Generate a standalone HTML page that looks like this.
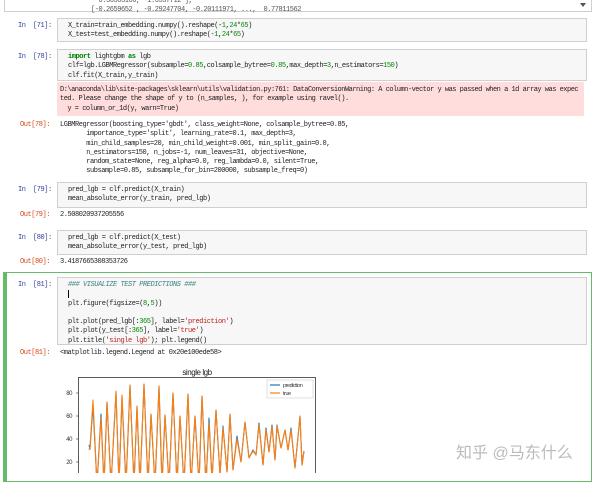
<!DOCTYPE html>
<html><head><meta charset="utf-8"><style>
*{margin:0;padding:0;box-sizing:border-box}
body{width:600px;height:473px;overflow:hidden;background:#fff;position:relative;font-family:"Liberation Mono","Noto Sans CJK SC",monospace;font-size:7px;color:#222;letter-spacing:-0.45px}
.a{position:absolute;white-space:pre;line-height:9.3px}
.box{position:absolute;left:57px;width:530px;background:#f7f7f7;border:1px solid #cfcfcf}
.lbl{position:absolute;left:18px;color:#303f9f;white-space:pre}
.olbl{position:absolute;left:20px;color:#d84315;white-space:pre}
.kw{color:#008000;font-weight:bold}.n{color:#080}.s{color:#ba2121}.c{color:#408080;font-style:italic}
</style></head><body>
<div style="position:absolute;left:4px;top:-2px;width:588px;height:14px;border:1px solid #cfcfcf;border-top:none;background:#fff"></div>
<div class="a" style="left:91px;top:-3px;color:#555">  0.36303166, -1.6537712 ],
[-0.2659652 , -0.29247704, -0.20111971, ...,  0.77811562</div>
<div style="position:absolute;left:580px;top:3px;border:3px solid transparent;border-top:4px solid #555"></div>

<div class="lbl" style="top:22px">In  [71]:</div>
<div class="box" style="top:18px;height:24px"></div>
<div class="a" style="left:68px;top:22px">X_train=train_embedding.numpy().reshape(-<span class="n">1</span>,<span class="n">24</span>*<span class="n">65</span>)
X_test=test_embedding.numpy().reshape(-<span class="n">1</span>,<span class="n">24</span>*<span class="n">65</span>)</div>

<div class="lbl" style="top:53px">In  [78]:</div>
<div class="box" style="top:49px;height:32px"></div>
<div class="a" style="left:68px;top:53px"><span class="kw">import</span> lightgbm <span class="kw">as</span> lgb
clf=lgb.LGBMRegressor(subsample=<span class="n">0.85</span>,colsample_bytree=<span class="n">0.85</span>,max_depth=<span class="n">3</span>,n_estimators=<span class="n">150</span>)
clf.fit(X_train,y_train)</div>
<div style="position:absolute;left:57px;top:82px;width:527px;height:34px;background:#fdd"></div>
<div class="a" style="left:60px;top:86px;letter-spacing:-0.5px">D:\anaconda\lib\site-packages\sklearn\utils\validation.py:761: DataConversionWarning: A column-vector y was passed when a 1d array was expec
ted. Please change the shape of y to (n_samples, ), for example using ravel().
  y = column_or_1d(y, warn=True)</div>

<div class="olbl" style="top:121px">Out[78]:</div>
<div class="a" style="left:60px;top:121px">LGBMRegressor(boosting_type='gbdt', class_weight=None, colsample_bytree=0.85,
       importance_type='split', learning_rate=0.1, max_depth=3,
       min_child_samples=20, min_child_weight=0.001, min_split_gain=0.0,
       n_estimators=150, n_jobs=-1, num_leaves=31, objective=None,
       random_state=None, reg_alpha=0.0, reg_lambda=0.0, silent=True,
       subsample=0.85, subsample_for_bin=200000, subsample_freq=0)</div>

<div class="lbl" style="top:186px">In  [79]:</div>
<div class="box" style="top:182px;height:26px"></div>
<div class="a" style="left:68px;top:186px">pred_lgb = clf.predict(X_train)
mean_absolute_error(y_train, pred_lgb)</div>
<div class="olbl" style="top:211px">Out[79]:</div>
<div class="a" style="left:60px;top:211px">2.508020937205556</div>

<div class="lbl" style="top:234px">In  [80]:</div>
<div class="box" style="top:230px;height:25px"></div>
<div class="a" style="left:68px;top:234px">pred_lgb = clf.predict(X_test)
mean_absolute_error(y_test, pred_lgb)</div>
<div class="olbl" style="top:258px">Out[80]:</div>
<div class="a" style="left:60px;top:258px">3.4187665308353726</div>

<div style="position:absolute;left:3px;top:272px;width:589px;height:210px;border:1px solid #66bb6a;border-left:4px solid #66bb6a"></div>
<div class="lbl" style="top:281px">In  [81]:</div>
<div style="position:absolute;left:58px;top:282px;color:#999">▪</div>
<div class="box" style="top:277px;height:68px"></div>
<div class="a" style="left:68px;top:281px"><span class="c">### VISUALIZE TEST PREDICTIONS ###</span>
<span style="border-left:1px solid #000"> </span>
plt.figure(figsize=(<span class="n">8</span>,<span class="n">5</span>))

plt.plot(pred_lgb[:<span class="n">365</span>], label=<span class="s">'prediction'</span>)
plt.plot(y_test[:<span class="n">365</span>], label=<span class="s">'true'</span>)
plt.title(<span class="s">'single lgb'</span>); plt.legend()</div>
<div class="olbl" style="top:349px">Out[81]:</div>
<div class="a" style="left:60px;top:349px">&lt;matplotlib.legend.Legend at 0x20e100ede58&gt;</div>

<svg style="position:absolute;left:0;top:0" width="600" height="473">
<text x="197" y="375" font-family="Liberation Sans" font-size="8" fill="#222" text-anchor="middle">single lgb</text>
<rect x="78.5" y="377.5" width="237" height="110" fill="none" stroke="#333" stroke-width="0.8"/>
<g font-family="Liberation Sans" font-size="6" fill="#333" text-anchor="end">
<text x="72" y="395">80</text><text x="72" y="418">60</text><text x="72" y="441">40</text><text x="72" y="464">20</text></g>
<g stroke="#333" stroke-width="0.6"><line x1="76" y1="393" x2="78" y2="393"/><line x1="76" y1="416" x2="78" y2="416"/><line x1="76" y1="439" x2="78" y2="439"/><line x1="76" y1="462" x2="78" y2="462"/></g>
<g fill="none" stroke-width="1.1" stroke-linejoin="round">
<polyline stroke="#1f77b4" points="89,445 90,449 93,406 97,485 101,414 104,485 107,402 111,485 116,393 119,485 122,397 126,485 130,385 134,485 137,406 140,485 144,384 148,485 151,414 155,485 159,386 162,485 165,415 169,485 173,393 177,485 180,416 184,485 188,394 191,485 195,416 199,485 202,396 206,485 209,418 212,480 216,410 220,475 223,426 227,472 230,414 233,470 237,436 241,462 245,422 249,458 253,450 256,455 259,423 263,465 266,428 269,452 272,425 275,460 277,425 281,448 285,430 288,450 291,428 295,468 300,416 302,465 304,451"/>
<polyline stroke="#ff7f0e" points="89,450 90,447 93,400 97,485 101,418 104,485 107,402 111,485 116,391 119,485 122,395 126,485 130,385 134,485 137,406 140,485 144,384 148,485 151,414 155,485 159,386 162,485 165,415 169,485 173,393 177,485 180,416 184,485 188,394 191,485 195,416 199,485 202,396 206,485 209,423 212,480 216,410 220,475 223,428 227,472 230,414 233,470 237,439 241,462 245,422 249,458 253,451 256,455 259,425 263,465 266,430 269,452 272,427 275,460 277,426 281,448 285,430 288,450 291,430 295,468 300,416 302,465 304,451"/>
</g>
<rect x="267" y="380" width="46" height="18" fill="#fff" fill-opacity="0.9" stroke="#ccc" stroke-width="0.6"/>
<line x1="270" y1="385" x2="280" y2="385" stroke="#1f77b4" stroke-width="1.2"/>
<line x1="270" y1="393" x2="280" y2="393" stroke="#ff7f0e" stroke-width="1.2"/>
<g font-family="Liberation Sans" font-size="5.5" fill="#333"><text x="283" y="387">prediction</text><text x="283" y="395">true</text></g>
</svg>
<div style="position:absolute;left:456px;top:439px;font-family:'Liberation Sans','Noto Sans CJK SC',sans-serif;font-size:16px;letter-spacing:0;color:#bbb;white-space:nowrap">知乎 @马东什么</div>
</body></html>
